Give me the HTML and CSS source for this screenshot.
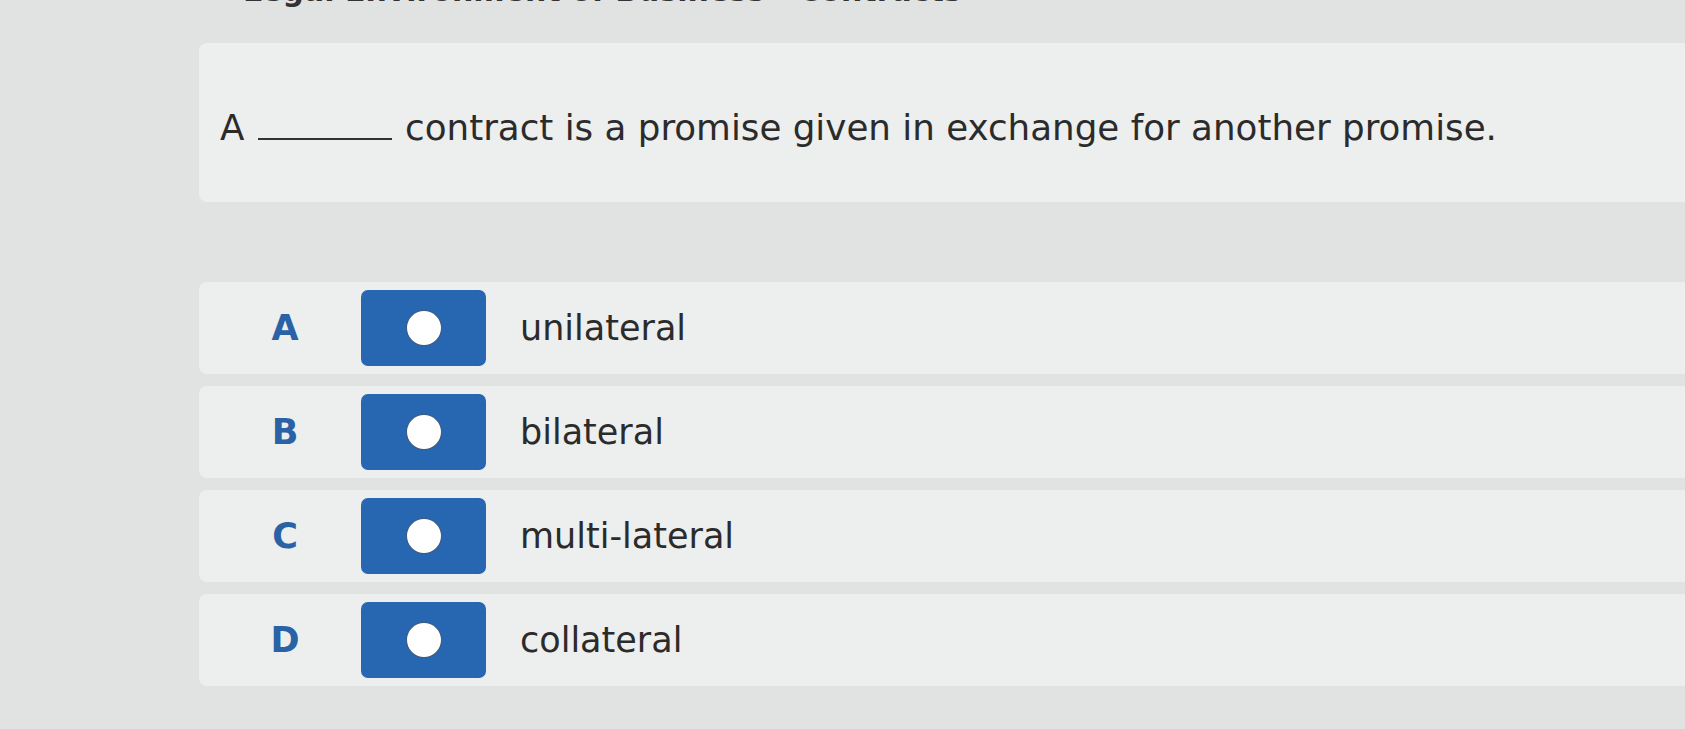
FILE: index.html
```html
<!DOCTYPE html>
<html lang="en">
  <head>
    <meta charset="UTF-8" />
    <meta name="viewport" content="width=device-width, initial-scale=1.0" />
    <title>Contracts Quiz</title>
    <link rel="stylesheet" href="styles.css">
  </head>
  <body>
    <h1 class="page-title">Legal Environment of Business - Contracts</h1>

    <div class="question">
      <p>A <span class="blank"></span> contract is a promise given in exchange for another promise.</p>
    </div>

    <ul class="choices">
      <li class="choice">
        <span class="letter">A</span>
        <button class="radio" type="button"><span class="dot"></span></button>
        <span class="answer">unilateral</span>
      </li>
      <li class="choice">
        <span class="letter">B</span>
        <button class="radio" type="button"><span class="dot"></span></button>
        <span class="answer">bilateral</span>
      </li>
      <li class="choice">
        <span class="letter">C</span>
        <button class="radio" type="button"><span class="dot"></span></button>
        <span class="answer">multi-lateral</span>
      </li>
      <li class="choice">
        <span class="letter">D</span>
        <button class="radio" type="button"><span class="dot"></span></button>
        <span class="answer">collateral</span>
      </li>
    </ul>
  </body>
</html>
```

FILE: styles.css
```css
body {
  font-family: "DejaVu Sans", Verdana, sans-serif;
  background-color: #e1e3e3;
  color: #2b2b2b;
  margin: 0;
  padding: 0 0 0 199px;
  overflow: hidden;
}

.page-title {
  margin: -24px 0 0 44px;
  height: 30px;
  font-size: 30px;
  line-height: 30px;
  font-weight: 600;
  color: #333;
  white-space: nowrap;
}

.question {
  display: flex;
  align-items: center;
  height: 159px;
  margin-top: 37px;
  padding-left: 21px;
  background: #edeeee;
  border-radius: 8px 0 0 8px;
}

.question p {
  margin: 10px 0 0;
  font-size: 35.7px;
}

.blank {
  display: inline-block;
  width: 134px;
  border-bottom: 2px solid #333;
  margin: 0 2px;
}

.choices {
  list-style: none;
  margin: 80px 0 0;
  padding: 0;
  display: flex;
  flex-direction: column;
  gap: 12px;
}

.choice {
  display: flex;
  align-items: center;
  height: 92px;
  background: #edeeee;
  border-radius: 8px 0 0 8px;
}

.letter {
  width: 152px;
  padding-left: 10px;
  text-align: center;
  font-size: 35px;
  font-weight: bold;
  color: #2a62a6;
}

.radio {
  display: flex;
  align-items: center;
  justify-content: center;
  width: 125px;
  height: 76px;
  border: none;
  border-radius: 7px;
  background-color: #2767b1;
  padding: 0;
}

.dot {
  width: 34px;
  height: 34px;
  border-radius: 50%;
  background: #fff;
  box-shadow: 0 0 0 1px rgba(90, 80, 70, 0.5);
}

.answer {
  margin-left: 34px;
  font-size: 35px;
  color: #2b2b2b;
}
```
